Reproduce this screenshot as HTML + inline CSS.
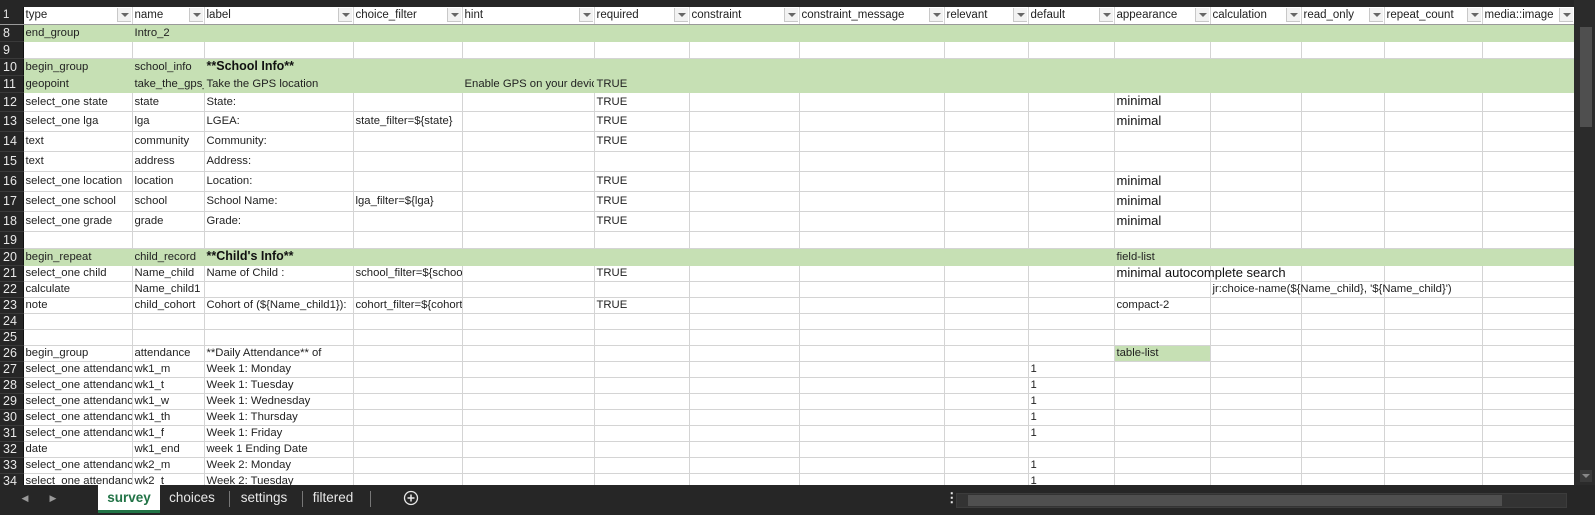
<!DOCTYPE html>
<html><head><meta charset="utf-8"><style>
html,body{margin:0;padding:0;width:1595px;height:513px;overflow:hidden;background:#262626;font-family:"Liberation Sans",Arial,sans-serif;}
#top{position:absolute;left:0;top:0;width:1574px;height:7px;background:#262626;}
table{position:absolute;left:0;top:7px;border-collapse:collapse;table-layout:fixed;width:1574px;background:#fff;}
td{border-right:1px solid #d4d4d4;border-bottom:1px solid #d4d4d4;padding:0 0 0 2px;font-size:11.3px;color:#222;white-space:nowrap;overflow:visible;vertical-align:middle;line-height:12px;}
td.c{overflow:hidden;}
td.rh{background:#262626;color:#e8e8e8;font-size:12.5px;text-align:left;padding-left:3px;border-right:1px solid #111;border-bottom:1px solid #3a3a3a;}
tr.g td{background:#c6e0b4;border-right-color:#c6e0b4;border-bottom-color:#c6e0b4;}
tr.g td.rh{background:#262626;border-right-color:#111;border-bottom-color:#3a3a3a;}
tr.h td{position:relative;border-bottom:1px solid #9a9a9a;font-size:11.5px;}
tr.h td .dd{position:absolute;right:1px;top:1px;width:14px;height:14px;background:#f2f2f2;border-left:1px solid #c8c8c8;border-bottom:1px solid #c8c8c8;box-sizing:border-box;}
tr.h td .dd:after{content:"";position:absolute;left:3px;top:5px;border-left:4px solid transparent;border-right:4px solid transparent;border-top:4px solid #666;}
.m{font-size:13px;color:#111;}
.b{font-weight:bold;font-size:12.5px;color:#111;}
.gc{background:#c6e0b4 !important;}
#vs{position:absolute;left:1574px;top:0;width:21px;height:485px;background:#2b2b2b;}
#vthumb{position:absolute;left:1580px;top:27px;width:12px;height:100px;background:#4f4f4f;}
#vdown{position:absolute;left:1580px;top:470px;width:12px;height:12px;background:#3a3a3a;}
#vdown:after{content:"";position:absolute;left:2px;top:4px;border-left:4px solid transparent;border-right:4px solid transparent;border-top:4px solid #888;}
#tabs{position:absolute;left:0;top:485px;width:1595px;height:28px;background:#262626;}
.tab{position:absolute;top:0;height:25px;line-height:26px;font-size:13.5px;color:#e8e8e8;text-align:center;}
.sep{position:absolute;top:6px;width:1px;height:16px;background:#777;}
#hs{position:absolute;left:956px;top:493px;width:609px;height:13px;background:#333;border:1px solid #3c3c3c;}
#hthumb{position:absolute;left:968px;top:495px;width:534px;height:11px;background:#4f4f4f;}
</style></head><body>
<div id="top"></div>
<table>
<colgroup><col style="width:23px"><col style="width:109px"><col style="width:72px"><col style="width:149px"><col style="width:109px"><col style="width:132px"><col style="width:95px"><col style="width:110px"><col style="width:145px"><col style="width:84px"><col style="width:86px"><col style="width:96px"><col style="width:91px"><col style="width:83px"><col style="width:98px"><col style="width:92px"></colgroup>
<tr class="h" style="height:17px"><td class="rh">1</td><td>type<span class="dd"></span></td><td>name<span class="dd"></span></td><td>label<span class="dd"></span></td><td>choice_filter<span class="dd"></span></td><td>hint<span class="dd"></span></td><td>required<span class="dd"></span></td><td>constraint<span class="dd"></span></td><td>constraint_message<span class="dd"></span></td><td>relevant<span class="dd"></span></td><td>default<span class="dd"></span></td><td>appearance<span class="dd"></span></td><td>calculation<span class="dd"></span></td><td>read_only<span class="dd"></span></td><td>repeat_count<span class="dd"></span></td><td>media::image<span class="dd"></span></td></tr>
<tr class="g" style="height:17px"><td class="rh">8</td><td>end_group</td><td>Intro_2</td><td></td><td></td><td></td><td></td><td></td><td></td><td></td><td></td><td></td><td></td><td></td><td></td><td></td></tr>
<tr style="height:17px"><td class="rh">9</td><td></td><td></td><td></td><td></td><td></td><td></td><td></td><td></td><td></td><td></td><td></td><td></td><td></td><td></td><td></td></tr>
<tr class="g" style="height:17px"><td class="rh">10</td><td>begin_group</td><td>school_info</td><td><span class="b">**School Info**</span></td><td></td><td></td><td></td><td></td><td></td><td></td><td></td><td></td><td></td><td></td><td></td><td></td></tr>
<tr class="g" style="height:17px"><td class="rh">11</td><td>geopoint</td><td class="c">take_the_gps_location</td><td>Take the GPS location</td><td></td><td class="c">Enable GPS on your device first</td><td>TRUE</td><td></td><td></td><td></td><td></td><td></td><td></td><td></td><td></td><td></td></tr>
<tr style="height:19px"><td class="rh">12</td><td>select_one state</td><td>state</td><td>State:</td><td></td><td></td><td>TRUE</td><td></td><td></td><td></td><td></td><td><span class="m">minimal</span></td><td></td><td></td><td></td><td></td></tr>
<tr style="height:20px"><td class="rh">13</td><td>select_one lga</td><td>lga</td><td>LGEA:</td><td>state_filter=${state}</td><td></td><td>TRUE</td><td></td><td></td><td></td><td></td><td><span class="m">minimal</span></td><td></td><td></td><td></td><td></td></tr>
<tr style="height:20px"><td class="rh">14</td><td>text</td><td>community</td><td>Community:</td><td></td><td></td><td>TRUE</td><td></td><td></td><td></td><td></td><td></td><td></td><td></td><td></td><td></td></tr>
<tr style="height:20px"><td class="rh">15</td><td>text</td><td>address</td><td>Address:</td><td></td><td></td><td></td><td></td><td></td><td></td><td></td><td></td><td></td><td></td><td></td><td></td></tr>
<tr style="height:20px"><td class="rh">16</td><td class="c">select_one location</td><td>location</td><td>Location:</td><td></td><td></td><td>TRUE</td><td></td><td></td><td></td><td></td><td><span class="m">minimal</span></td><td></td><td></td><td></td><td></td></tr>
<tr style="height:20px"><td class="rh">17</td><td>select_one school</td><td>school</td><td>School Name:</td><td>lga_filter=${lga}</td><td></td><td>TRUE</td><td></td><td></td><td></td><td></td><td><span class="m">minimal</span></td><td></td><td></td><td></td><td></td></tr>
<tr style="height:20px"><td class="rh">18</td><td>select_one grade</td><td>grade</td><td>Grade:</td><td></td><td></td><td>TRUE</td><td></td><td></td><td></td><td></td><td><span class="m">minimal</span></td><td></td><td></td><td></td><td></td></tr>
<tr style="height:17px"><td class="rh">19</td><td></td><td></td><td></td><td></td><td></td><td></td><td></td><td></td><td></td><td></td><td></td><td></td><td></td><td></td><td></td></tr>
<tr class="g" style="height:17px"><td class="rh">20</td><td>begin_repeat</td><td>child_record</td><td><span class="b">**Child's Info**</span></td><td></td><td></td><td></td><td></td><td></td><td></td><td></td><td>field-list</td><td></td><td></td><td></td><td></td></tr>
<tr style="height:16px"><td class="rh">21</td><td>select_one child</td><td>Name_child</td><td>Name of Child :</td><td class="c">school_filter=${school}</td><td></td><td>TRUE</td><td></td><td></td><td></td><td></td><td><span class="m">minimal autocomplete search</span></td><td></td><td></td><td></td><td></td></tr>
<tr style="height:16px"><td class="rh">22</td><td>calculate</td><td>Name_child1</td><td></td><td></td><td></td><td></td><td></td><td></td><td></td><td></td><td></td><td>jr:choice-name(${Name_child}, '${Name_child}')</td><td></td><td></td><td></td></tr>
<tr style="height:16px"><td class="rh">23</td><td>note</td><td>child_cohort</td><td class="c">Cohort of (${Name_child1}):</td><td class="c">cohort_filter=${cohort}</td><td></td><td>TRUE</td><td></td><td></td><td></td><td></td><td>compact-2</td><td></td><td></td><td></td><td></td></tr>
<tr style="height:16px"><td class="rh">24</td><td></td><td></td><td></td><td></td><td></td><td></td><td></td><td></td><td></td><td></td><td></td><td></td><td></td><td></td><td></td></tr>
<tr style="height:16px"><td class="rh">25</td><td></td><td></td><td></td><td></td><td></td><td></td><td></td><td></td><td></td><td></td><td></td><td></td><td></td><td></td><td></td></tr>
<tr style="height:16px"><td class="rh">26</td><td>begin_group</td><td>attendance</td><td>**Daily Attendance** of</td><td></td><td></td><td></td><td></td><td></td><td></td><td></td><td class="gc">table-list</td><td></td><td></td><td></td><td></td></tr>
<tr style="height:16px"><td class="rh">27</td><td class="c">select_one attendance</td><td>wk1_m</td><td>Week 1: Monday</td><td></td><td></td><td></td><td></td><td></td><td></td><td>1</td><td></td><td></td><td></td><td></td><td></td></tr>
<tr style="height:16px"><td class="rh">28</td><td class="c">select_one attendance</td><td>wk1_t</td><td>Week 1: Tuesday</td><td></td><td></td><td></td><td></td><td></td><td></td><td>1</td><td></td><td></td><td></td><td></td><td></td></tr>
<tr style="height:16px"><td class="rh">29</td><td class="c">select_one attendance</td><td>wk1_w</td><td>Week 1: Wednesday</td><td></td><td></td><td></td><td></td><td></td><td></td><td>1</td><td></td><td></td><td></td><td></td><td></td></tr>
<tr style="height:16px"><td class="rh">30</td><td class="c">select_one attendance</td><td>wk1_th</td><td>Week 1: Thursday</td><td></td><td></td><td></td><td></td><td></td><td></td><td>1</td><td></td><td></td><td></td><td></td><td></td></tr>
<tr style="height:16px"><td class="rh">31</td><td class="c">select_one attendance</td><td>wk1_f</td><td>Week 1: Friday</td><td></td><td></td><td></td><td></td><td></td><td></td><td>1</td><td></td><td></td><td></td><td></td><td></td></tr>
<tr style="height:16px"><td class="rh">32</td><td>date</td><td>wk1_end</td><td>week 1 Ending Date</td><td></td><td></td><td></td><td></td><td></td><td></td><td></td><td></td><td></td><td></td><td></td><td></td></tr>
<tr style="height:16px"><td class="rh">33</td><td class="c">select_one attendance</td><td>wk2_m</td><td>Week 2: Monday</td><td></td><td></td><td></td><td></td><td></td><td></td><td>1</td><td></td><td></td><td></td><td></td><td></td></tr>
<tr style="height:16px"><td class="rh">34</td><td class="c">select_one attendance</td><td>wk2_t</td><td>Week 2: Tuesday</td><td></td><td></td><td></td><td></td><td></td><td></td><td>1</td><td></td><td></td><td></td><td></td><td></td></tr>
</table>
<div id="vs"></div><div id="vthumb"></div><div id="vdown"></div>
<div id="tabs">
  <div class="tab" style="left:18px;width:14px;color:#999;font-size:9px">&#9664;</div>
  <div class="tab" style="left:46px;width:14px;color:#999;font-size:9px">&#9654;</div>
  <div class="tab" style="left:98px;width:62px;background:#fff;color:#217346;font-weight:bold;border-bottom:3px solid #217346;">survey</div>
  <div class="tab" style="left:166px;width:52px;">choices</div>
  <div class="sep" style="left:229px"></div>
  <div class="tab" style="left:236px;width:56px;">settings</div>
  <div class="sep" style="left:302px"></div>
  <div class="tab" style="left:308px;width:50px;">filtered</div>
  <div class="sep" style="left:370px"></div>
  <div class="tab" style="left:403px;width:16px;"><svg width="16" height="16" viewBox="0 0 16 16" style="margin-top:5px"><circle cx="8" cy="8" r="6.5" fill="none" stroke="#e8e8e8" stroke-width="1.3"/><path d="M8 4.5v7M4.5 8h7" stroke="#e8e8e8" stroke-width="1.5"/></svg></div>
  <div class="tab" style="left:945px;width:6px;font-weight:bold;">&#8942;</div>
</div>
<div id="hs"></div><div id="hthumb"></div>
</body></html>
